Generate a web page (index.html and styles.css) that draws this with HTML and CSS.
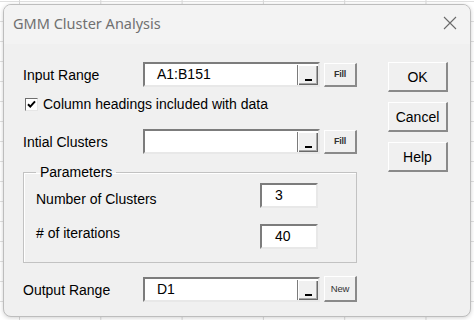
FILE: index.html
```html
<!DOCTYPE html>
<html>
<head>
<meta charset="utf-8">
<link rel="stylesheet" href="styles.css">
</head>
<body>
<div class="dialog">
  <div class="titlebar">
    <span class="title">GMM Cluster Analysis</span>
    <svg class="close" width="14" height="14" viewBox="0 0 14 14"><path d="M1 1L13 13M13 1L1 13" stroke="#6a6a6a" stroke-width="1.1" fill="none"/></svg>
  </div>
  <div class="content">
    <div class="form">
      <div class="row">
        <span class="lbl">Input Range</span>
        <div class="refedit"><span class="val">A1:B151</span><span class="pick"><i></i></span></div>
        <span class="small">Fill</span>
      </div>
      <div class="check">
        <span class="box"><svg width="11" height="11" viewBox="0 0 11 11"><path d="M2 5.2L4.3 7.6L9 2.4" stroke="#000" stroke-width="2" fill="none"/></svg></span>
        <span>Column headings included with data</span>
      </div>
      <div class="row second">
        <span class="lbl">Intial Clusters</span>
        <div class="refedit"><span class="val"></span><span class="pick"><i></i></span></div>
        <span class="small">Fill</span>
      </div>
      <fieldset class="params">
        <legend>Parameters</legend>
        <div class="prow first">
          <span class="plbl">Number of Clusters</span>
          <div class="num">3</div>
        </div>
        <div class="prow next">
          <span class="plbl">#&nbsp;of iterations</span>
          <div class="num">40</div>
        </div>
      </fieldset>
      <div class="row output">
        <span class="lbl">Output Range</span>
        <div class="refedit"><span class="val">D1</span><span class="pick"><i></i></span></div>
        <span class="small tall">New</span>
      </div>
    </div>
    <div class="actions">
      <span class="btn">OK</span>
      <span class="btn">Cancel</span>
      <span class="btn">Help</span>
    </div>
  </div>
</div>
</body>
</html>
```

FILE: styles.css
```css
html, body {
  margin: 0;
  height: 100%;
}
body {
  background-color: #ffffff;
  background-image:
    linear-gradient(to right, #d9d9d9 1px, transparent 1px),
    linear-gradient(to bottom, #e0e0e0 1px, transparent 1px);
  background-size: 81.3px 100%, 100% 20px;
  background-position: 19px 0, 0 1px;
  font-family: "Liberation Sans", Arial, sans-serif;
  font-size: 14px;
  color: #000;
  overflow: hidden;
}
.dialog {
  margin: 4px 0 0 3px;
  width: 468px;
  height: 313px;
  box-sizing: border-box;
  background: #f0f0f0;
  border: 1px solid #bdbdbd;
  border-radius: 8px;
  overflow: hidden;
  box-shadow: 0 1px 4px rgba(0, 0, 0, 0.18);
}
.titlebar {
  height: 39px;
  box-sizing: border-box;
  padding: 0 13px 3px 9px;
  display: flex;
  align-items: center;
  justify-content: space-between;
  background: #f3f3f3;
}
.title {
  font-family: "Noto Sans", "Open Sans", sans-serif;
  font-size: 14.5px;
  color: #707070;
}
.close {
  display: block;
}
.content {
  display: flex;
  padding-left: 19px;
}
.form {
  width: 334px;
  padding-top: 18px;
}
.row {
  display: flex;
  align-items: center;
  height: 25px;
}
.row.second {
  margin-top: 17px;
}
.row.output {
  margin-top: 14px;
}
.lbl {
  width: 120px;
}
.refedit {
  width: 177px;
  height: 25px;
  box-sizing: border-box;
  display: flex;
  background: #fff;
  border: 2px solid;
  border-color: #7c7c7c #e8e8e8 #e8e8e8 #7c7c7c;
}
.val {
  flex: 1;
  padding-left: 12px;
  line-height: 21px;
}
.pick {
  width: 21px;
  margin-top: 1px;
  box-sizing: border-box;
  background: #f0f0f0;
  border-left: 1px solid #7c7c7c;
  box-shadow: inset 1px 1px #ffffff, inset -1px -1px #696969, inset -2px -2px #a8a8a8;
  display: flex;
  align-items: flex-end;
  justify-content: center;
  padding-bottom: 4px;
}
.pick i {
  display: block;
  width: 7px;
  height: 2px;
  background: #000;
}
.small {
  margin-left: 4px;
  width: 33px;
  height: 24px;
  box-sizing: border-box;
  display: flex;
  align-items: center;
  justify-content: center;
  background: #f0f0f0;
  border-top: 1px solid #ffffff;
  border-left: 1px solid #ffffff;
  border-right: 2px solid #8a8a8a;
  border-bottom: 2px solid #8a8a8a;
  font-size: 9px;
  color: #333;
  font-weight: bold;
  letter-spacing: -0.2px;
}
.small.tall {
  height: 26px;
  margin-top: -1px;
  font-weight: normal;
  font-size: 9.5px;
}
.check {
  display: flex;
  align-items: center;
  height: 16px;
  margin-top: 9px;
  padding-left: 2px;
}
.box {
  width: 13px;
  height: 13px;
  box-sizing: border-box;
  margin-right: 5px;
  background: #fff;
  border: 1px solid;
  border-color: #6e6e6e #e6e6e6 #e6e6e6 #6e6e6e;
  display: flex;
  align-items: center;
  justify-content: center;
}
.box svg {
  display: block;
}
.params {
  margin: 10px 0 0 0;
  padding: 0 12px 13px 12px;
  width: 334px;
  box-sizing: border-box;
  border: 1px solid #c2c2c2;
  box-shadow: inset 1px 1px #ffffff;
  min-width: 0;
}
.params legend {
  padding: 0 4px;
  line-height: 17px;
}
.prow {
  display: flex;
  align-items: flex-start;
  justify-content: space-between;
  padding-right: 26px;
}
.prow.first {
  margin-top: 2px;
}
.prow.next {
  margin-top: 16px;
}
.plbl {
  line-height: 17px;
}
.prow.first .plbl {
  margin-top: 8px;
}
.prow.next .plbl {
  margin-top: 1px;
}
.num {
  width: 58px;
  height: 25px;
  box-sizing: border-box;
  background: #fff;
  border: 2px solid;
  border-color: #7c7c7c #e8e8e8 #e8e8e8 #7c7c7c;
  padding-left: 13px;
  line-height: 21px;
}
.actions {
  margin-left: 31px;
  padding-top: 18px;
  display: flex;
  flex-direction: column;
  gap: 10px;
}
.btn {
  width: 60px;
  height: 30px;
  box-sizing: border-box;
  display: flex;
  align-items: center;
  justify-content: center;
  background: #f0f0f0;
  border-top: 1px solid #ffffff;
  border-left: 1px solid #ffffff;
  border-right: 2px solid #8a8a8a;
  border-bottom: 2px solid #8a8a8a;
}
```
